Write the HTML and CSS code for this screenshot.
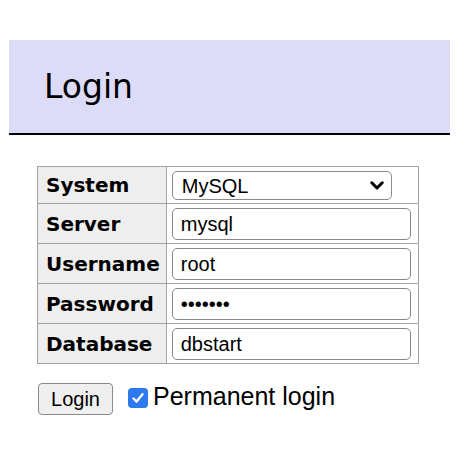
FILE: index.html
```html
<!DOCTYPE html>
<html lang="en">
<head>
<meta charset="utf-8">
<title>Login</title>
<link rel="stylesheet" href="styles.css">
</head>
<body>
<div class="header"><h1 class="title">Login</h1></div>
<form class="login">
  <table class="fields">
    <tr><th>System</th><td><select class="select"><option>MySQL</option></select></td></tr>
    <tr><th>Server</th><td><input class="field" type="text" value="mysql"></td></tr>
    <tr><th>Username</th><td><input class="field" type="text" value="root"></td></tr>
    <tr><th>Password</th><td><input class="field" type="password" value="abcdefg"></td></tr>
    <tr><th>Database</th><td><input class="field" type="text" value="dbstart"></td></tr>
  </table>
  <div class="actions">
    <button class="btn" type="button">Login</button>
    <label class="perm"><span class="check"><svg width="14" height="14" viewBox="0 0 14 14"><path d="M2.5 7.5 L5.6 10.6 L11.5 3.2" fill="none" stroke="#fff" stroke-width="2.4" stroke-linecap="round" stroke-linejoin="round"/></svg></span>Permanent login</label>
  </div>
</form>
</body>
</html>
```

FILE: styles.css
```css
html, body {
  margin: 0;
  padding: 0;
  background: #fff;
}
body {
  font-family: "Liberation Sans", Arial, sans-serif;
  color: #000;
}
.header {
  margin: 40px 24px 0 9px;
  height: 93px;
  background: #dcdcf8;
  border-bottom: 2px solid #000;
  display: flex;
  align-items: center;
}
.title {
  margin: 0 0 0 35px;
  font-family: "DejaVu Sans", Verdana, sans-serif;
  font-weight: normal;
  font-size: 33px;
  line-height: 1;
}
.login {
  margin: 31px 0 0 37px;
}
.fields {
  border-collapse: collapse;
  border: 1px solid #a3a3a3;
}
.fields th,
.fields td {
  border: 1px solid #a3a3a3;
}
.fields th {
  background: #eee;
  text-align: left;
  font-family: "DejaVu Sans", Verdana, sans-serif;
  font-weight: bold;
  font-size: 20px;
  padding: 0 6px 0 8px;
}
.fields td {
  padding: 4px 7px 3px 5px;
  background: #fff;
}
.field {
  display: block;
  box-sizing: border-box;
  width: 239px;
  height: 32px;
  margin: 0;
  padding: 0 8px;
  border: 1px solid #858585;
  border-radius: 5px;
  font-family: "Liberation Sans", Arial, sans-serif;
  font-size: 20px;
  color: #000;
  background: #fff;
}
.select {
  display: block;
  box-sizing: border-box;
  width: 220px;
  height: 29px;
  margin: 0;
  padding: 0 30px 0 9px;
  border: 1px solid #8a8a8a;
  border-radius: 5px;
  font-family: "Liberation Sans", Arial, sans-serif;
  font-size: 20px;
  color: #000;
  -webkit-appearance: none;
  appearance: none;
  background: #fff url("data:image/svg+xml;utf8,<svg xmlns='http://www.w3.org/2000/svg' width='14' height='9' viewBox='0 0 14 9'><path d='M1.8 1.8 L7 7 L12.2 1.8' fill='none' stroke='black' stroke-width='3' stroke-linecap='round' stroke-linejoin='round'/></svg>") no-repeat right 7px center;
}
.actions {
  display: flex;
  align-items: flex-start;
  margin-top: 19px;
  gap: 15px;
}
.btn {
  box-sizing: border-box;
  width: 75px;
  height: 32px;
  margin: 0 0 0 1px;
  padding: 0;
  border: 1px solid #8a8a8a;
  border-radius: 4px;
  background: #efefef;
  font-family: "Liberation Sans", Arial, sans-serif;
  font-size: 20px;
  color: #000;
}
.perm {
  display: flex;
  align-items: flex-start;
  gap: 5px;
  font-size: 25px;
  line-height: 29px;
  margin-top: -1px;
}
.check {
  width: 20px;
  height: 20px;
  border-radius: 4px;
  background: #2f79ee;
  display: flex;
  align-items: center;
  justify-content: center;
  margin-top: 6px;
}
```
